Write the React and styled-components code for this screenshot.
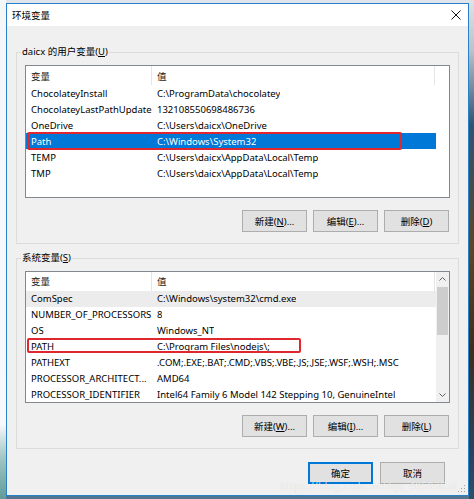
import React from "react";
import styled, { createGlobalStyle } from "styled-components";

const userVars = [
  ["ChocolateyInstall", "C:\\ProgramData\\chocolatey"],
  ["ChocolateyLastPathUpdate", "132108550698486736"],
  ["OneDrive", "C:\\Users\\daicx\\OneDrive"],
  ["Path", "C:\\Windows\\System32"],
  ["TEMP", "C:\\Users\\daicx\\AppData\\Local\\Temp"],
  ["TMP", "C:\\Users\\daicx\\AppData\\Local\\Temp"],
];

const sysVars = [
  ["ComSpec", "C:\\Windows\\system32\\cmd.exe"],
  ["NUMBER_OF_PROCESSORS", "8"],
  ["OS", "Windows_NT"],
  ["PATH", "C:\\Program Files\\nodejs\\;"],
  ["PATHEXT", ".COM;.EXE;.BAT;.CMD;.VBS;.VBE;.JS;.JSE;.WSF;.WSH;.MSC"],
  ["PROCESSOR_ARCHITECT...", "AMD64"],
  ["PROCESSOR_IDENTIFIER", "Intel64 Family 6 Model 142 Stepping 10, GenuineIntel"],
];

const App = () => {
  return (
    <>
      <GlobalStyle />
      <Desktop>
        <Strip $side="left" />
        <Dialog>
          <TitleBar>
            <Title>环境变量</Title>
            <Close>
              <svg width="10" height="10" viewBox="0 0 10 10">
                <path d="M0.5 0.5 L9.5 9.5 M9.5 0.5 L0.5 9.5" stroke="#111" strokeWidth="1" />
              </svg>
            </Close>
          </TitleBar>
          <Body>
            <Group>
              <Legend>
                daicx 的用户变量(<u>U</u>)
              </Legend>
              <ListView $height={133}>
                <Rows>
                  <Header>
                    <HeaderCell $width={126}>变量</HeaderCell>
                    <HeaderCell $width={283}>值</HeaderCell>
                  </Header>
                  {userVars.map(([name, value]) => (
                    <Row key={name} $state={name === "Path" ? "active" : ""}>
                      <NameCell>{name}</NameCell>
                      <ValueCell>{value}</ValueCell>
                      {name === "Path" && <Marker $width={375} $top={-1} $height={18} />}
                    </Row>
                  ))}
                </Rows>
              </ListView>
              <ButtonRow>
                <Button>
                  新建(<u>N</u>)...
                </Button>
                <Button>
                  编辑(<u>E</u>)...
                </Button>
                <Button>
                  删除(<u>D</u>)
                </Button>
              </ButtonRow>
            </Group>
            <Group $gap={6}>
              <Legend>
                系统变量(<u>S</u>)
              </Legend>
              <ListView $height={132}>
                <Rows>
                  <Header>
                    <HeaderCell $width={126}>变量</HeaderCell>
                    <HeaderCell $width={283}>值</HeaderCell>
                  </Header>
                  {sysVars.map(([name, value]) => (
                    <Row key={name} $state={name === "ComSpec" ? "idle" : ""}>
                      <NameCell>{name}</NameCell>
                      <ValueCell>{value}</ValueCell>
                      {name === "PATH" && <Marker $width={274} $top={0} $height={15} />}
                    </Row>
                  ))}
                </Rows>
                <ScrollBar>
                  <Arrow>
                    <svg width="7" height="4" viewBox="0 0 7 4">
                      <path d="M0.5 3.5 L3.5 0.5 L6.5 3.5" fill="none" stroke="#606060" strokeWidth="1" />
                    </svg>
                  </Arrow>
                  <Track>
                    <Thumb />
                  </Track>
                  <Arrow>
                    <svg width="7" height="4" viewBox="0 0 7 4">
                      <path d="M0.5 0.5 L3.5 3.5 L6.5 0.5" fill="none" stroke="#606060" strokeWidth="1" />
                    </svg>
                  </Arrow>
                </ScrollBar>
              </ListView>
              <ButtonRow>
                <Button>
                  新建(<u>W</u>)...
                </Button>
                <Button>
                  编辑(<u>I</u>)...
                </Button>
                <Button>
                  删除(<u>L</u>)
                </Button>
              </ButtonRow>
            </Group>
            <Footer>
              <Button $primary>确定</Button>
              <Button>取消</Button>
            </Footer>
          </Body>
          <Watermark>https://blog.csdn.net/qq_40593656</Watermark>
          <Grip>
            <svg width="8" height="8" viewBox="0 0 8 8">
              <g fill="#a0a0a0">
                <rect x="6" y="0" width="1" height="1" />
                <rect x="3" y="3" width="1" height="1" />
                <rect x="6" y="3" width="1" height="1" />
                <rect x="0" y="6" width="1" height="1" />
                <rect x="3" y="6" width="1" height="1" />
                <rect x="6" y="6" width="1" height="1" />
              </g>
            </svg>
          </Grip>
        </Dialog>
        <Strip $side="right" />
      </Desktop>
    </>
  );
};

export default App;

const GlobalStyle = createGlobalStyle`
  html, body {
    margin: 0;
    padding: 0;
  }
  body {
    width: 474px;
    height: 499px;
    overflow: hidden;
    font-family: "Noto Sans", "Noto Sans CJK SC", sans-serif;
    font-size: 9.5px;
    color: #000;
  }
`;

const Desktop = styled.div`
  display: flex;
  height: 499px;
  background: linear-gradient(180deg, #dfe5ea 0%, #dfe5ea 1%, #4f7590 100%);
`;

const Strip = styled.div`
  flex: ${(p) => (p.$side === "left" ? "0 0 6px" : "1")};
  background: ${(p) =>
    p.$side === "left"
      ? "linear-gradient(180deg, #f4f6f8 0%, #f7f8fa 85%, #9fc4c2 92%, #5f9c9a 100%)"
      : "linear-gradient(180deg, #dfe3e7 0%, #b9c3cc 10%, #2f5573 25%, #5a4628 50%, #3b3020 70%, #29425b 90%, #2c4f6a 100%)"};
`;

const Dialog = styled.div`
  position: relative;
  flex: 0 0 463px;
  margin-top: 3px;
  height: 493px;
  box-sizing: border-box;
  border: 1px solid #2a7fc9;
  background: #f0f0f0;
  display: flex;
  flex-direction: column;
`;

const TitleBar = styled.div`
  height: 22px;
  background: #fff;
  display: flex;
  align-items: center;
  justify-content: space-between;
  padding: 0 6px 0 5px;
`;

const Title = styled.span`
  font-size: 9.5px;
  color: #000;
`;

const Close = styled.span`
  display: flex;
  margin-right: 1px;
`;

const Body = styled.div`
  padding: 18px 9px 0;
  display: flex;
  flex-direction: column;
`;

const Group = styled.fieldset`
  margin: ${(p) => p.$gap || 0}px 0 0;
  padding: 0 8px 11px;
  border: 1px solid #dcdcdc;
  min-width: 0;
`;

const Legend = styled.legend`
  margin-left: -4px;
  padding: 0 1px;
  line-height: 16px;
  font-size: 9.5px;
  color: #000;
`;

const ListView = styled.div`
  margin-top: 5px;
  height: ${(p) => p.$height}px;
  box-sizing: border-box;
  border: 1px solid #828790;
  background: #fff;
  display: flex;
  justify-content: space-between;
`;

const Rows = styled.div`
  width: 410px;
  display: flex;
  flex-direction: column;
`;

const Header = styled.div`
  display: flex;
  height: 19px;
`;

const HeaderCell = styled.div`
  width: ${(p) => p.$width}px;
  box-sizing: border-box;
  border-right: 1px solid #e5e5e5;
  padding-left: 5px;
  display: flex;
  align-items: center;
  color: #1a1a1a;
`;

const Row = styled.div`
  position: relative;
  height: 16px;
  display: flex;
  align-items: center;
  white-space: nowrap;
  background: ${(p) =>
    p.$state === "active" ? "#0078d7" : p.$state === "idle" ? "#ececec" : "transparent"};
  color: ${(p) => (p.$state === "active" ? "#fff" : "#000")};
`;

const NameCell = styled.span`
  width: 126px;
  flex: 0 0 126px;
  box-sizing: border-box;
  padding-left: 5px;
  overflow: hidden;
`;

const ValueCell = styled.span`
  padding-left: 5px;
  overflow: hidden;
`;

const Marker = styled.span`
  position: absolute;
  left: 1px;
  top: ${(p) => p.$top}px;
  width: ${(p) => p.$width}px;
  height: ${(p) => p.$height}px;
  box-sizing: border-box;
  border: 2px solid #e0262e;
  border-radius: 2px;
`;

const ScrollBar = styled.div`
  width: 13px;
  background: #f0f0f0;
  display: flex;
  flex-direction: column;
`;

const Arrow = styled.div`
  height: 14px;
  display: flex;
  align-items: center;
  justify-content: center;
`;

const Track = styled.div`
  flex: 1;
  padding: 1px 1px 0;
`;

const Thumb = styled.div`
  height: 48px;
  background: #cdcdcd;
`;

const ButtonRow = styled.div`
  display: flex;
  justify-content: flex-end;
  gap: 6px;
  margin-top: 12px;
  padding-right: 1px;
`;

const Button = styled.button`
  width: 65px;
  height: 22px;
  padding: 0;
  font-family: inherit;
  font-size: 9.5px;
  color: #000;
  background: #e1e1e1;
  border: 1px solid ${(p) => (p.$primary ? "#0078d7" : "#adadad")};
  box-shadow: ${(p) => (p.$primary ? "inset 0 0 0 1px #0078d7" : "none")};
  u {
    text-underline-offset: 1px;
  }
`;

const Footer = styled.div`
  display: flex;
  justify-content: flex-end;
  gap: 7px;
  padding: 13px 14px 0 0;
`;

const Watermark = styled.span`
  position: absolute;
  right: 10px;
  bottom: 2px;
  font-size: 10px;
  color: rgba(255, 255, 255, 0.75);
  letter-spacing: 0.4px;
  text-shadow: 0 0 1px rgba(0, 0, 0, 0.15);
`;

const Grip = styled.span`
  position: absolute;
  right: 2px;
  bottom: 2px;
  display: flex;
`;
